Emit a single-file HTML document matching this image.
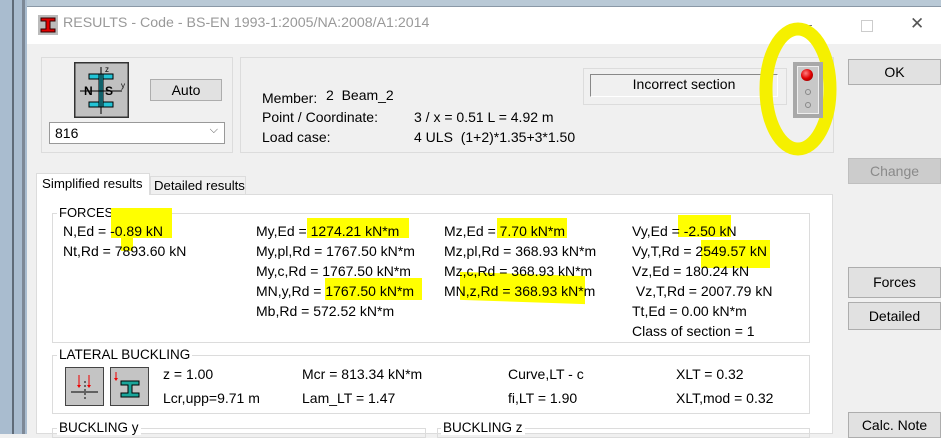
<!DOCTYPE html>
<html><head><style>
body{margin:0;width:941px;height:434px;overflow:hidden;background:#f0f0f0;font-family:"Liberation Sans",sans-serif;font-size:14px;color:#000;position:relative}
.a{position:absolute;white-space:nowrap}
.btn{position:absolute;background:#e1e1e1;border:1px solid #adadad;text-align:center;box-sizing:border-box}
.grp{position:absolute;border:1px solid #dcdcdc;box-sizing:border-box}
.hl{position:absolute;background:#ffff00}
.lbl{position:absolute;background:#fff;padding:0 2px;line-height:14px;font-size:13.5px}
</style></head><body>
<div class="a" style="left:0;top:0;width:27px;height:434px;background:#a9bccf"></div>
<div class="a" style="left:12px;top:0;width:2px;height:434px;background:#5f6b78"></div>
<div class="a" style="left:22px;top:0;width:3px;height:434px;background:#7d8896"></div>
<div class="a" style="left:27px;top:0;width:914px;height:6px;background:#b9c9d6"></div>
<div class="a" style="left:27px;top:6px;width:914px;height:1px;background:#8a98a6"></div>
<div class="a" style="left:27px;top:7px;width:914px;height:37px;background:#fff"></div>
<svg class="a" style="left:38px;top:15px" width="20" height="20"><rect width="20" height="20" fill="#bbb"/><path d="M3 3h14v3h-5v8h5v3H3v-3h5V6H3z" fill="#e10000" stroke="#300" stroke-width="1"/></svg>
<div class="a" style="left:63px;top:15px;font-size:14.2px;color:#999">RESULTS - Code - BS-EN 1993-1:2005/NA:2008/A1:2014</div>
<div class="a" style="left:802px;top:25px;width:10px;height:1px;background:#777"></div>
<div class="a" style="left:861px;top:20px;width:10px;height:10px;border:1px solid #ccc"></div>
<div class="a" style="left:910px;top:14px;font-size:17px;color:#555">✕</div>

<div class="grp" style="left:41px;top:57px;width:192px;height:96px"></div>
<svg class="a" style="left:74px;top:62px" width="55" height="56"><rect x="0.5" y="0.5" width="54" height="55" fill="#c0c0c0" stroke="#333" stroke-width="2"/><rect x="15" y="12" width="24" height="5" fill="#22c4d6" stroke="#000"/><rect x="15" y="40" width="24" height="5" fill="#22c4d6" stroke="#000"/><rect x="25" y="12" width="4" height="33" fill="#22c4d6" stroke="#000"/><line x1="27" y1="5" x2="27" y2="52" stroke="#000"/><line x1="6" y1="29" x2="48" y2="29" stroke="#000"/><text x="10" y="33" font-size="12" font-weight="bold" font-family="Liberation Sans">N</text><text x="31" y="33" font-size="12" font-weight="bold" font-family="Liberation Sans">S</text><text x="31" y="10" font-size="8">z</text><text x="47" y="26" font-size="8">y</text></svg>
<div class="btn" style="left:150px;top:79px;width:72px;height:22px;line-height:20px">Auto</div>
<div class="a" style="left:49px;top:122px;width:176px;height:22px;background:#fff;border:1px solid #999;box-sizing:border-box"><span style="position:absolute;left:5px;top:2px">816</span><span style="position:absolute;right:6px;top:1px;color:#555;font-size:11px">⌵</span></div>

<div class="grp" style="left:240px;top:57px;width:594px;height:96px"></div>
<div class="a" style="left:262px;top:90px">Member:</div>
<div class="a" style="left:326px;top:87px">2 &nbsp;Beam_2</div>
<div class="a" style="left:262px;top:109px">Point / Coordinate:</div>
<div class="a" style="left:414px;top:109px">3 / x = 0.51 L = 4.92 m</div>
<div class="a" style="left:262px;top:129px">Load case:</div>
<div class="a" style="left:414px;top:129px">4 ULS &nbsp;(1+2)*1.35+3*1.50</div>
<div class="grp" style="left:583px;top:68px;width:204px;height:37px"></div>
<div class="a" style="left:590px;top:74px;width:188px;height:23px;border:1px solid #888;border-right-color:#fff;border-bottom-color:#fff;box-sizing:border-box;text-align:center;line-height:19px">Incorrect section</div>
<svg class="a" style="left:755px;top:16px" width="90" height="150"><ellipse cx="43" cy="73" rx="32" ry="60" fill="none" stroke="#f5f000" stroke-width="13"/></svg>
<div class="a" style="left:793px;top:62px;width:30px;height:56px;background:#a8a8a8"></div>
<div class="a" style="left:797px;top:66px;width:22px;height:48px;background:#c8c8c8;border:1px solid #eee;box-sizing:border-box"></div>
<div class="a" style="left:801px;top:69px;width:12px;height:12px;border-radius:50%;background:radial-gradient(circle at 40% 35%,#ff8080,#e00000 50%,#700)"></div>
<div class="a" style="left:805px;top:89px;width:4px;height:4px;border-radius:50%;border:1px solid #888"></div>
<div class="a" style="left:805px;top:102px;width:4px;height:4px;border-radius:50%;border:1px solid #888"></div>

<div class="btn" style="left:848px;top:59px;width:93px;height:26px;line-height:24px">OK</div>
<div class="btn" style="left:848px;top:158px;width:93px;height:26px;line-height:24px;background:#cccccc;border-color:#bfbfbf;color:#8a8a8a">Change</div>
<div class="btn" style="left:848px;top:267px;width:93px;height:31px;line-height:29px">Forces</div>
<div class="btn" style="left:848px;top:302px;width:93px;height:28px;line-height:26px">Detailed</div>
<div class="btn" style="left:848px;top:412px;width:93px;height:26px;line-height:24px">Calc. Note</div>

<div class="a" style="left:36px;top:194px;width:797px;height:240px;background:#fff;border:1px solid #dcdcdc;box-sizing:border-box"></div>
<div class="a" style="left:36px;top:173px;width:114px;height:22px;background:#fff;border:1px solid #dcdcdc;border-bottom:none;box-sizing:border-box;padding:2px 0 0 5px;font-size:13.3px">Simplified results</div>
<div class="a" style="left:150px;top:176px;width:96px;height:18px;background:#f0f0f0;border:1px solid #dcdcdc;border-bottom:none;box-sizing:border-box;padding:1px 0 0 3px;font-size:13.2px">Detailed results</div>

<div class="grp" style="left:52px;top:213px;width:758px;height:130px"></div>
<div class="lbl" style="left:57px;top:206px;font-size:13px">FORCES</div>
<div class="hl" style="left:111px;top:208px;width:61px;height:30px"></div>
<div class="hl" style="left:121px;top:237px;width:12px;height:14px"></div>
<div class="hl" style="left:307px;top:218px;width:102px;height:20px"></div>
<div class="hl" style="left:325px;top:278px;width:97px;height:22px"></div>
<div class="hl" style="left:497px;top:218px;width:70px;height:20px"></div>
<div class="hl" style="left:460px;top:274px;width:125px;height:28px;transform:skewY(2deg)"></div>
<div class="hl" style="left:678px;top:215px;width:53px;height:22px"></div>
<div class="hl" style="left:701px;top:240px;width:69px;height:28px"></div>
<div class="a" style="left:63px;top:221px;line-height:20px">N,Ed = -0.89 kN<br>Nt,Rd = 7893.60 kN</div>
<div class="a" style="left:256px;top:221px;line-height:20px">My,Ed = 1274.21 kN*m<br>My,pl,Rd = 1767.50 kN*m<br>My,c,Rd = 1767.50 kN*m<br>MN,y,Rd = 1767.50 kN*m<br>Mb,Rd = 572.52 kN*m</div>
<div class="a" style="left:444px;top:221px;line-height:20px">Mz,Ed = 7.70 kN*m<br>Mz,pl,Rd = 368.93 kN*m<br>Mz,c,Rd = 368.93 kN*m<br>MN,z,Rd = 368.93 kN*m</div>
<div class="a" style="left:632px;top:221px;line-height:20px">Vy,Ed = -2.50 kN<br>Vy,T,Rd = 2549.57 kN<br>Vz,Ed = 180.24 kN<br>&nbsp;Vz,T,Rd = 2007.79 kN<br>Tt,Ed = 0.00 kN*m<br>Class of section = 1</div>

<div class="grp" style="left:52px;top:355px;width:758px;height:59px"></div>
<div class="lbl" style="left:57px;top:348px">LATERAL BUCKLING</div>
<svg class="a" style="left:65px;top:367px" width="39" height="39"><rect x="0.5" y="0.5" width="38" height="38" fill="#c4c4c4" stroke="#444"/><line x1="6" y1="25" x2="33" y2="25" stroke="#000"/><line x1="20" y1="14" x2="20" y2="32" stroke="#000" stroke-dasharray="2 2"/><path d="M14 8v12M24 8v12" stroke="#e00"/><path d="M12 18l2 3 2-3M22 18l2 3 2-3" fill="#e00"/></svg>
<svg class="a" style="left:110px;top:367px" width="39" height="39"><rect x="0.5" y="0.5" width="38" height="38" fill="#c4c4c4" stroke="#444"/><path d="M6 5v8" stroke="#e00"/><path d="M4 11l2 3 2-3" fill="#e00"/><path d="M11 14h18v4h-7v8h7v4H11v-4h7v-8h-7z" fill="#1aa59a" stroke="#000"/></svg>
<div class="a" style="left:163px;top:366px">z = 1.00</div>
<div class="a" style="left:163px;top:390px">Lcr,upp=9.71 m</div>
<div class="a" style="left:302px;top:366px">Mcr = 813.34 kN*m</div>
<div class="a" style="left:302px;top:390px">Lam_LT = 1.47</div>
<div class="a" style="left:508px;top:366px">Curve,LT - c</div>
<div class="a" style="left:508px;top:390px">fi,LT = 1.90</div>
<div class="a" style="left:676px;top:366px">XLT = 0.32</div>
<div class="a" style="left:676px;top:390px">XLT,mod = 0.32</div>

<div class="grp" style="left:52px;top:428px;width:374px;height:10px"></div>
<div class="lbl" style="left:57px;top:421px">BUCKLING y</div>
<div class="grp" style="left:437px;top:428px;width:373px;height:10px"></div>
<div class="lbl" style="left:441px;top:421px">BUCKLING z</div>
</body></html>
